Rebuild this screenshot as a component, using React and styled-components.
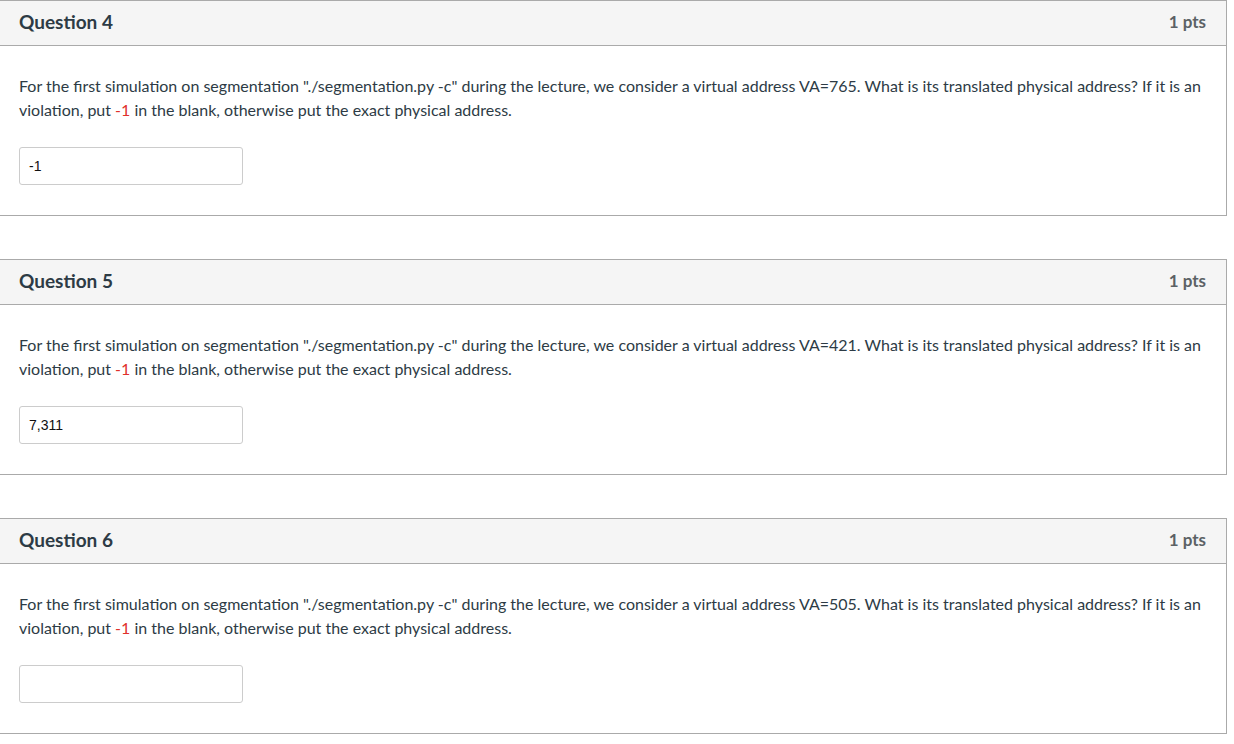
import React from 'react'
import styled, { createGlobalStyle } from 'styled-components';

const GlobalStyle = createGlobalStyle`
    body {
        margin: 0;
        background: #fff;
        font-family: Lato, "Open Sans", sans-serif;
        color: #2d3b45;
    }
`;

const Page = styled.div`
    display: flex;
    flex-direction: column;
    gap: 43px;
    margin-left: -2px;
    width: 1229px;
`;

const Card = styled.div`
    border: 1px solid #aaa;
    background: #fff;
`;

const Header = styled.div`
    display: flex;
    justify-content: space-between;
    align-items: center;
    box-sizing: border-box;
    height: 45px;
    padding: 0 20px 4px;
    background: #f5f5f5;
    border-bottom: 1px solid #aaa;
`;

const Title = styled.span`
    font-size: 19px;
    font-weight: 700;
    color: #2d3b45;
`;

const Points = styled.span`
    font-size: 17px;
    font-weight: 700;
    color: #5b6165;
`;

const Body = styled.div`
    padding: 28px 20px 30px;
`;

const Text = styled.p`
    margin: 0 0 25px;
    font-size: 16px;
    line-height: 24px;
    color: #2d3b45;
`;

const Red = styled.span`
    color: #e0312b;
`;

const Answer = styled.div`
    box-sizing: border-box;
    width: 224px;
    height: 38px;
    border: 1px solid #ccc;
    border-radius: 3px;
    padding: 0 9px;
    display: flex;
    align-items: center;
    font-family: "Liberation Sans", Arial, sans-serif;
    font-size: 14px;
    color: #111;
`;

const questions = [
    { n: 4, va: 765, answer: '-1' },
    { n: 5, va: 421, answer: '7,311' },
    { n: 6, va: 505, answer: '' },
];

const App = () => {
    return (
        <>
            <GlobalStyle />
            <Page>
                {questions.map(q => (
                    <Card key={q.n}>
                        <Header>
                            <Title>Question {q.n}</Title>
                            <Points>1 pts</Points>
                        </Header>
                        <Body>
                            <Text>
                                For the first simulation on segmentation "./segmentation.py -c" during the lecture, we consider a virtual address VA={q.va}. What is its translated physical address? If it is an violation, put <Red>-1</Red> in the blank, otherwise put the exact physical address.
                            </Text>
                            <Answer>{q.answer}</Answer>
                        </Body>
                    </Card>
                ))}
            </Page>
        </>
    )
}

export default App;
